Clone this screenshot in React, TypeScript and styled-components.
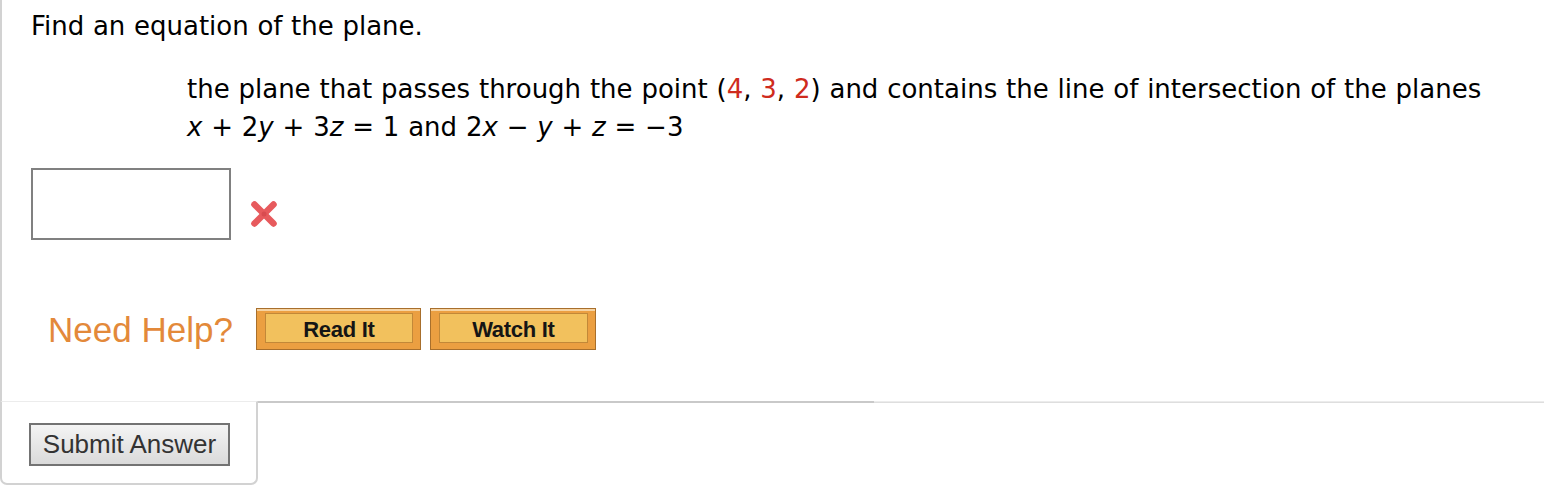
import React from "react";
import styled, { createGlobalStyle } from "styled-components";

const GlobalStyle = createGlobalStyle`
  html, body {
    margin: 0;
    padding: 0;
    background: #ffffff;
  }
  body {
    font-family: "DejaVu Sans", Verdana, sans-serif;
    color: #000;
  }
`;

const Page = styled.div`
  width: 1544px;
  display: flex;
  flex-direction: column;
`;

const QuestionBox = styled.div`
  border-left: 2px solid #d2d2d2;
  padding: 11px 0 51px 29px;
  display: flex;
  flex-direction: column;
`;

const Heading = styled.div`
  font-size: 26px;
  line-height: 30px;
  word-spacing: 0.4px;
`;

const Prompt = styled.div`
  margin: 29px 0 0 156px;
  font-size: 26px;
  line-height: 38px;
  word-spacing: 0.55px;
`;

const Red = styled.span`
  color: #cf2b1d;
`;

const Var = styled.i`
  font-style: italic;
`;

const AnswerRow = styled.div`
  display: flex;
  align-items: flex-start;
  gap: 19px;
  margin-top: 22px;
`;

const AnswerInput = styled.input`
  box-sizing: border-box;
  width: 200px;
  height: 72px;
  border: 2px solid #808080;
  background: #fff;
  margin: 0;
  padding: 0 6px;
  font: 26px "DejaVu Sans", Verdana, sans-serif;
`;

const WrongMark = styled.svg`
  margin-top: 32px;
  flex: none;
`;

const HelpRow = styled.div`
  display: flex;
  align-items: center;
  margin-top: 68px;
  padding-left: 17px;
`;

const HelpTitle = styled.span`
  font: 35px "Liberation Sans", Arial, sans-serif;
  color: #e3893a;
  margin-right: 23px;
  line-height: 41px;
`;

const HelpButton = styled.button<{ $w: number }>`
  box-sizing: border-box;
  width: ${(p) => p.$w}px;
  height: 42px;
  margin: 0 9px 0 0;
  padding: 4px 7px 6px 8px;
  border: 1px solid #a86f2c;
  background: #eb9f41;
  box-shadow: inset 0 2px 0 #f6d3a2;
  display: flex;
  cursor: pointer;
`;

const HelpLabel = styled.span`
  flex: 1;
  border: 1px solid #c28838;
  background: #f2c15d;
  display: flex;
  align-items: center;
  justify-content: center;
  padding-top: 3px;
  font: bold 22px "Liberation Sans", Arial, sans-serif;
  color: #151515;
  letter-spacing: -0.3px;
`;

const Footer = styled.div`
  display: flex;
  align-items: flex-start;
`;

const SubmitTab = styled.div`
  box-sizing: border-box;
  width: 258px;
  height: 84px;
  border: 2px solid #d2d2d2;
  border-top: 1px solid #ececec;
  border-radius: 0 0 7px 7px;
  padding: 21px 0 0 27px;
`;

const SubmitButton = styled.button`
  box-sizing: border-box;
  width: 201px;
  height: 43px;
  margin: 0;
  padding: 0;
  border: 2px solid #737373;
  background: linear-gradient(#f4f4f4, #dadada);
  font: 26px "Liberation Sans", Arial, sans-serif;
  color: #333;
  cursor: pointer;
`;

const Rule = styled.div`
  flex: 1;
  display: flex;
`;

const RuleSegment = styled.div<{ $light?: boolean }>`
  height: 2px;
  background: ${(p) => (p.$light ? "#dedede" : "#c9c9c9")};
  flex: ${(p) => (p.$light ? "1" : "0 0 616px")};
  ${(p) => (p.$light ? "border-top: 1px solid #ececec; height: 1px;" : "")}
`;

export default function App() {
  return (
    <Page>
      <GlobalStyle />
      <QuestionBox>
        <Heading>Find an equation of the plane.</Heading>
        <Prompt>
          the plane that passes through the point (<Red>4</Red>, <Red>3</Red>, <Red>2</Red>) and contains the line of
          intersection of the planes
          <br />
          <Var>x</Var> + 2<Var>y</Var> + 3<Var>z</Var> = 1 and 2<Var>x</Var> − <Var>y</Var> + <Var>z</Var> = −3
        </Prompt>
        <AnswerRow>
          <AnswerInput type="text" aria-label="answer" />
          <WrongMark width="28" height="28" viewBox="0 0 28 28">
            <g stroke="#e75a5d" strokeWidth="6.5" strokeLinecap="round">
              <line x1="4.5" y1="4.5" x2="23.5" y2="23.5" />
              <line x1="23.5" y1="4.5" x2="4.5" y2="23.5" />
            </g>
            <circle cx="14" cy="14" r="2.5" fill="#d94b50" />
          </WrongMark>
        </AnswerRow>
        <HelpRow>
          <HelpTitle>Need Help?</HelpTitle>
          <HelpButton $w={165}>
            <HelpLabel>Read It</HelpLabel>
          </HelpButton>
          <HelpButton $w={166}>
            <HelpLabel>Watch It</HelpLabel>
          </HelpButton>
        </HelpRow>
      </QuestionBox>
      <Footer>
        <SubmitTab>
          <SubmitButton>Submit Answer</SubmitButton>
        </SubmitTab>
        <Rule>
          <RuleSegment />
          <RuleSegment $light />
        </Rule>
      </Footer>
    </Page>
  );
}
